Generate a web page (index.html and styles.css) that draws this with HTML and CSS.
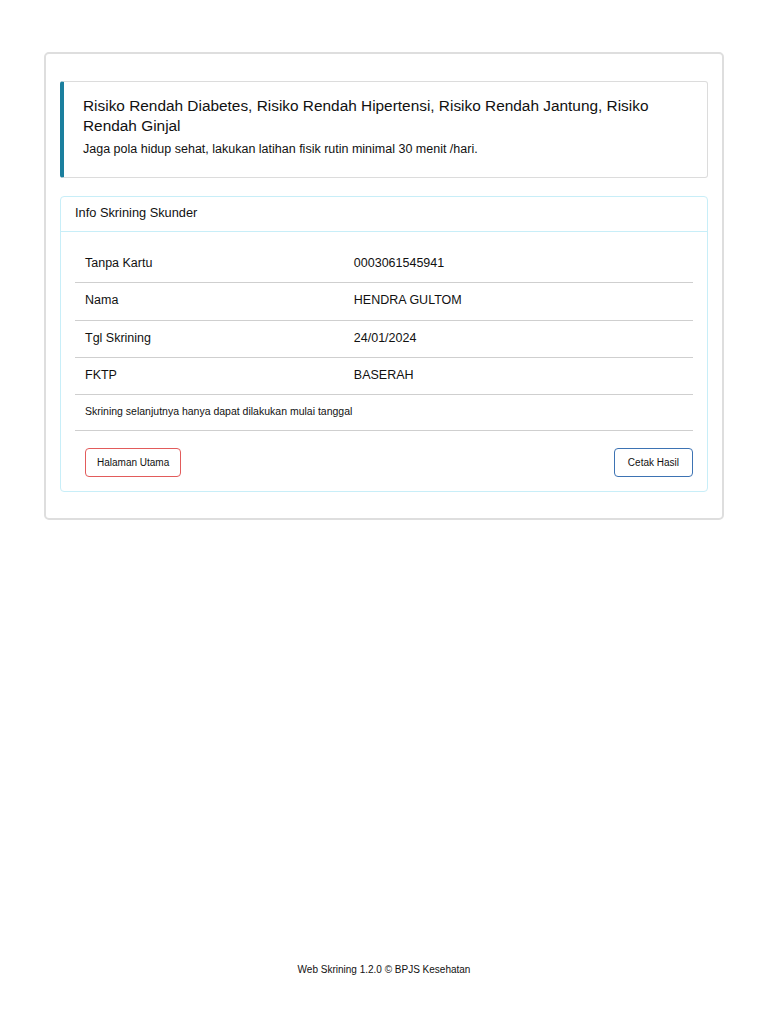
FILE: index.html
```html
<!DOCTYPE html>
<html lang="id">
<head>
<meta charset="utf-8">
<title>Web Skrining</title>
<link rel="stylesheet" href="styles.css">
</head>
<body>
<div class="page">
  <main class="main">
    <div class="outer-card">
      <div class="alert">
        <div class="alert-title">Risiko Rendah Diabetes, Risiko Rendah Hipertensi, Risiko Rendah Jantung, Risiko Rendah Ginjal</div>
        <div class="alert-text">Jaga pola hidup sehat, lakukan latihan fisik rutin minimal 30 menit /hari.</div>
      </div>
      <div class="info-card">
        <div class="info-header">Info Skrining Skunder</div>
        <div class="info-body">
          <table class="info-table">
            <tr class="first"><td class="label">Tanpa Kartu</td><td class="value">0003061545941</td></tr>
            <tr class="tall"><td class="label">Nama</td><td class="value">HENDRA GULTOM</td></tr>
            <tr><td class="label">Tgl Skrining</td><td class="value">24/01/2024</td></tr>
            <tr><td class="label">FKTP</td><td class="value">BASERAH</td></tr>
            <tr class="note-row"><td colspan="2" class="note">Skrining selanjutnya hanya dapat dilakukan mulai tanggal</td></tr>
          </table>
          <div class="actions">
            <button class="btn btn-red">Halaman Utama</button>
            <button class="btn btn-blue">Cetak Hasil</button>
          </div>
        </div>
      </div>
    </div>
  </main>
  <footer class="footer">Web Skrining 1.2.0 © BPJS Kesehatan</footer>
</div>
</body>
</html>
```
FILE: styles.css
```css
* { box-sizing: border-box; }
html, body { margin: 0; padding: 0; background: #fff; }
body {
  font-family: "Liberation Sans", Arial, sans-serif;
  color: #111;
}
.page {
  min-height: 1024px;
  display: flex;
  flex-direction: column;
}
.main {
  flex: 1;
  padding: 52px 44px 0;
}
.outer-card {
  border: 2px solid #dedede;
  border-radius: 5px;
  padding: 27px 14px 26px;
}
.alert {
  border: 1px solid #dcdcdc;
  border-left: 4px solid #1b7f9e;
  border-radius: 3px;
  padding: 14px 20px 20px 19px;
}
.alert-title {
  font-size: 15.4px;
  line-height: 20px;
  color: #111;
}
.alert-text {
  font-size: 12.5px;
  line-height: 16px;
  margin-top: 5px;
}
.info-card {
  margin-top: 18px;
  border: 1px solid #c8eef8;
  border-radius: 4px;
}
.info-header {
  font-size: 12.8px;
  height: 35px;
  line-height: 31px;
  padding: 0 14px;
  border-bottom: 1px solid #c8eef8;
}
.info-body {
  padding: 14px 14px 14px 14px;
}
.info-table {
  width: 100%;
  border-collapse: collapse;
  font-size: 12.5px;
}
.info-table td {
  border-top: 1px solid #cfcfcf;
  padding: 0 10px 2px;
  height: 37px;
}
.info-table tr.first td {
  border-top: none;
  height: 36px;
}
.info-table tr.tall td { height: 38px; }
.info-table td.label { width: 43.5%; }
.info-table tr.note-row td {
  border-bottom: 1px solid #cfcfcf;
  font-size: 10.5px;
  height: 36px;
}
.actions {
  display: flex;
  justify-content: space-between;
  padding: 17px 0 0 10px;
}
.btn {
  font-family: inherit;
  font-size: 10px;
  color: #111;
  background: #fff;
  height: 29px;
  border-radius: 4px;
  padding: 0 11px;
  cursor: pointer;
}
.btn-red { border: 1px solid #e25b5b; }
.btn-blue { border: 1px solid #3d73b3; padding: 0 13px; }
.footer {
  text-align: center;
  font-size: 10px;
  padding-bottom: 49px;
}
```
